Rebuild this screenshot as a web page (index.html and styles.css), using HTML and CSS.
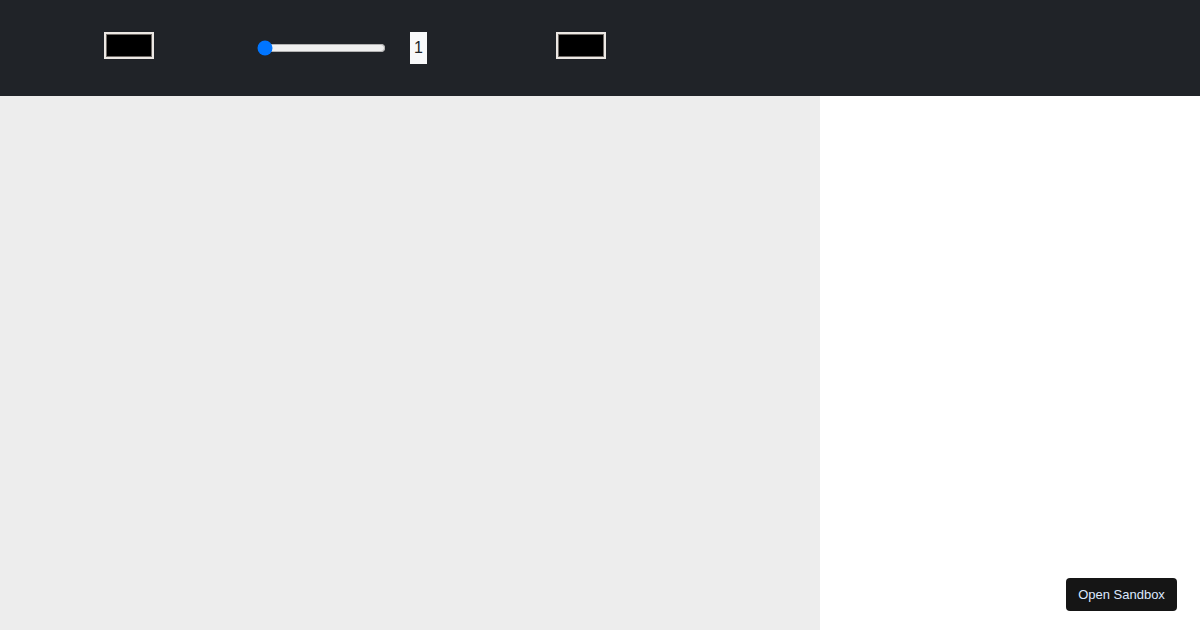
FILE: index.html
```html
<!DOCTYPE html>
<html>
<head>
<meta charset="utf-8">
<link rel="stylesheet" href="styles.css">
</head>
<body>
<header class="toolbar">
  <span class="swatch"></span>
  <input class="slider" type="range" min="1" max="50" value="1">
  <span class="value">1</span>
  <span class="swatch swatch-b"></span>
</header>
<main class="workspace">
  <section class="canvas"></section>
  <aside class="side"></aside>
</main>
<a class="sandbox-btn" href="#">Open Sandbox</a>
</body>
</html>
```
FILE: styles.css
```css
html, body {
  margin: 0;
  padding: 0;
  height: 100%;
  overflow: hidden;
  font-family: "Liberation Sans", Arial, sans-serif;
}
body {
  display: flex;
  flex-direction: column;
}
.toolbar {
  height: 96px;
  flex: none;
  background: #202328;
  display: flex;
  align-items: flex-start;
  padding: 32px 0 0 104px;
  box-sizing: border-box;
}
.swatch {
  width: 50px;
  height: 27px;
  box-sizing: border-box;
  background: #000;
  border: 2px solid #ece8e4;
  box-shadow: inset 0 0 0 1px #6f6a66;
}
.slider {
  width: 129px;
  margin: 8px 0 0 103px;
}
.value {
  margin-left: 24px;
  width: 17px;
  height: 32px;
  background: #f8f9fa;
  color: #212529;
  font-size: 16px;
  display: flex;
  align-items: center;
  justify-content: center;
}
.swatch-b {
  margin-left: 129px;
}
.workspace {
  flex: 1;
  display: flex;
}
.canvas {
  width: 820px;
  background: #ededed;
}
.side {
  flex: 1;
  background: #ffffff;
}
.sandbox-btn {
  position: fixed;
  right: 23px;
  bottom: 19px;
  width: 111px;
  height: 33px;
  box-sizing: border-box;
  background: #151515;
  color: #dce8ff;
  border-radius: 4px;
  font-size: 13px;
  text-decoration: none;
  display: flex;
  align-items: center;
  justify-content: center;
}
```
